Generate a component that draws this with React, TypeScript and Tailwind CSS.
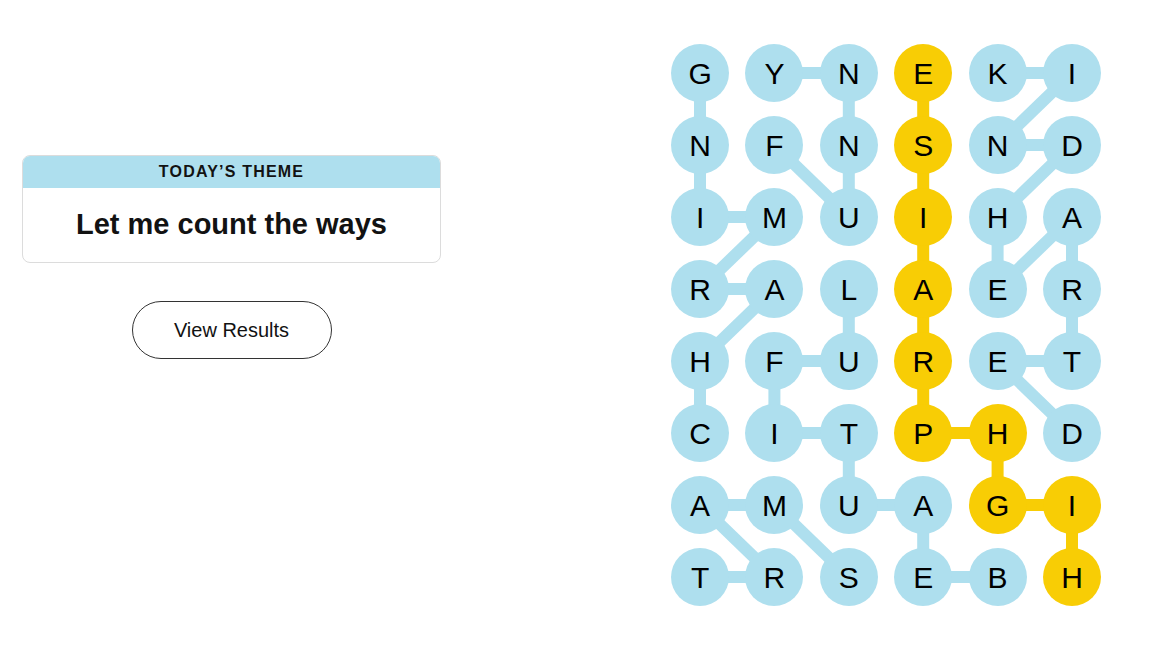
const letters = [
  "GYNEKI",
  "NFNSND",
  "IMUIHA",
  "RALAER",
  "HFURET",
  "CITPHD",
  "AMUAGI",
  "TRSEBH",
];

// cells that belong to the spangram
const found = new Set(["0-3", "1-3", "2-3", "3-3", "4-3", "5-3", "5-4", "6-4", "6-5", "7-5"]);

type Link = [number, number, number, number];

const blueLinks: Link[] = [
  [0, 0, 1, 0], [1, 0, 2, 0], [0, 1, 0, 2], [0, 2, 1, 2], [1, 2, 2, 2], [1, 1, 2, 2],
  [0, 4, 0, 5], [0, 5, 1, 4], [1, 4, 1, 5], [1, 5, 2, 4], [2, 4, 3, 4], [2, 5, 3, 4],
  [2, 5, 3, 5], [2, 0, 2, 1], [2, 1, 3, 0], [3, 0, 3, 1], [3, 1, 4, 0], [3, 2, 4, 2],
  [3, 5, 4, 5], [4, 0, 5, 0], [4, 1, 4, 2], [4, 1, 5, 1], [4, 4, 4, 5], [4, 4, 5, 5],
  [5, 1, 5, 2], [5, 2, 6, 2], [6, 0, 6, 1], [6, 0, 7, 1], [6, 1, 7, 2], [6, 2, 6, 3],
  [6, 3, 7, 3], [7, 0, 7, 1], [7, 3, 7, 4],
];

const yellowLinks: Link[] = [
  [0, 3, 1, 3], [1, 3, 2, 3], [2, 3, 3, 3], [3, 3, 4, 3], [4, 3, 5, 3],
  [5, 3, 5, 4], [5, 4, 6, 4], [6, 4, 6, 5], [6, 5, 7, 5],
];

const cx = (c: number) => 29 + c * 74.4;
const cy = (r: number) => 29 + r * 72;

function Board() {
  return (
    <div className="relative">
      <svg className="absolute inset-0" width="430" height="562" viewBox="0 0 430 562">
        {blueLinks.map(([r1, c1, r2, c2], i) => (
          <line key={"b" + i} x1={cx(c1)} y1={cy(r1)} x2={cx(c2)} y2={cy(r2)} stroke="#aedfee" strokeWidth="12" />
        ))}
        {yellowLinks.map(([r1, c1, r2, c2], i) => (
          <line key={"y" + i} x1={cx(c1)} y1={cy(r1)} x2={cx(c2)} y2={cy(r2)} stroke="#f8cd05" strokeWidth="12" />
        ))}
      </svg>
      <div className="relative grid grid-cols-[repeat(6,58px)] gap-x-[16.4px] gap-y-[14px]">
        {letters.map((row, r) =>
          row.split("").map((ch, c) => (
            <div
              key={r + "-" + c}
              className={
                "flex h-[58px] w-[58px] items-center justify-center rounded-full text-[30px] text-black " +
                (found.has(r + "-" + c) ? "bg-[#f8cd05]" : "bg-[#aedfee]")
              }
            >
              {ch}
            </div>
          ))
        )}
      </div>
    </div>
  );
}

export default function App() {
  return (
    <div
      className="flex h-[648px] w-full justify-between bg-white pr-[51px]"
      style={{ fontFamily: '"Liberation Sans", Arial, sans-serif' }}
    >
      <div className="flex w-[463px] flex-col items-center pl-[22px] pr-[22px] pt-[155px]">
        <div className="w-[419px] overflow-hidden rounded-lg border border-[#dcdcdc]">
          <div className="flex h-[32px] items-center justify-center bg-[#aedfee] text-[16px] font-semibold tracking-[1.2px] text-[#121212]">
            TODAY’S THEME
          </div>
          <div className="flex h-[74px] items-center justify-center text-[29px] font-bold text-[#121212]">
            Let me count the ways
          </div>
        </div>
        <button className="mt-[38px] h-[58px] w-[200px] rounded-full border border-[#333] text-[20px] text-[#121212]">
          View Results
        </button>
      </div>
      <div className="pt-[44px]">
        <Board />
      </div>
    </div>
  );
}
